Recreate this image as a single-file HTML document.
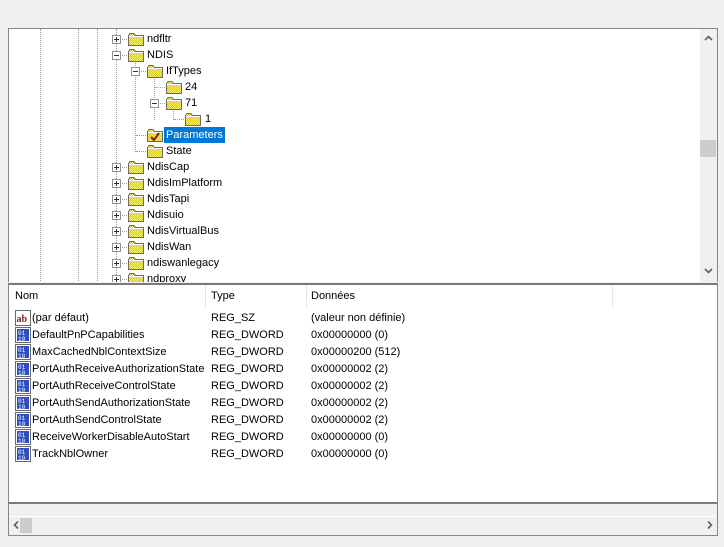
<!DOCTYPE html>
<html><head><meta charset="utf-8"><style>
*{margin:0;padding:0;box-sizing:border-box}
body{width:724px;height:547px;background:#f0f0f0;position:relative;overflow:hidden;font-family:"Liberation Sans",Arial,sans-serif;font-size:11px;color:#000}
.abs{position:absolute}
#tree{left:8px;top:28px;width:710px;height:254px;background:#fff;border:1px solid #828790;border-bottom:none;overflow:hidden}
#ti{position:absolute;left:0;top:2px;width:690px;height:260px}
.vl{position:absolute;width:0;border-left:1px dotted #a0a0a0}
.hl{position:absolute;height:0;border-top:1px dotted #a0a0a0}
.exp{position:absolute;width:9px;height:9px;border:1px solid #919191;background:#fff}
.exp:before{content:"";position:absolute;left:1px;top:3px;width:5px;height:1px;background:#333}
.exp.p:after{content:"";position:absolute;left:3px;top:1px;width:1px;height:5px;background:#333}
.fd{position:absolute;width:17px;height:14px}
.tx{position:absolute;height:16px;line-height:16px;white-space:nowrap}
.sel{background:#0078d7;color:#fff;padding:0 2px}
#vs{left:691px;top:0;width:17px;height:253px;background:#f0f0f0}
#list{left:8px;top:283px;width:710px;height:221px;background:#fff;border:1px solid #828790;border-top:2px solid #7a7a7a;border-bottom:2px solid #7a7a7a}
.hd{position:absolute;top:0;height:23px;line-height:23px}
.sep{position:absolute;top:0;width:1px;height:23px;background:#e5e5e5}
.row{position:absolute;left:0;height:17px;line-height:17px;white-space:nowrap}
.ic{position:absolute;left:6px;top:0;width:16px;height:16px}
</style></head><body>
<svg width="0" height="0" style="position:absolute"><defs>
<pattern id="pt" width="2" height="2" patternUnits="userSpaceOnUse"><rect width="2" height="2" fill="#f8f060"/><rect width="1" height="1" fill="#d8c830"/><rect x="1" y="1" width="1" height="1" fill="#d8c830"/></pattern>
<g id="f"><path d="M1.5 3.5 V13.5 H16.5 V3.5 H8.5 L7 1.5 H3 L1.5 3.5Z" fill="url(#pt)" stroke="#6b6b6b"/><path d="M2 4.5 H16" stroke="#fff"/></g>
<g id="b"><rect x="0.5" y="0.5" width="15" height="15" fill="#fff" stroke="#6a6a6a"/><rect x="2" y="2" width="12" height="12" fill="#2a4fc0"/><text x="3" y="8" font-size="6" fill="#fff" font-family="Liberation Mono">01</text><text x="3" y="14" font-size="6" fill="#fff" font-family="Liberation Mono">10</text></g>
<g id="a"><rect x="0.5" y="0.5" width="15" height="15" fill="#fff" stroke="#6a6a6a"/><text x="1.5" y="12" font-size="10" font-weight="bold" fill="#8b1a1a" font-family="Liberation Serif">ab</text></g>
</defs></svg>
<div id="tree" class="abs">
<div class="vl" style="left:31px;top:0;height:254px"></div>
<div class="vl" style="left:69px;top:0;height:254px"></div>
<div class="vl" style="left:88px;top:0;height:254px"></div>
<div id="ti">
<div class="vl" style="left:107px;top:-2px;height:262px"></div>
<div class="vl" style="left:126px;top:32px;height:89px"></div>
<div class="vl" style="left:145px;top:48px;height:41px"></div>
<div class="vl" style="left:164px;top:80px;height:9px"></div>

<div class="hl" style="left:108px;top:8px;width:10px"></div>
<div class="hl" style="left:108px;top:24px;width:10px"></div>
<div class="hl" style="left:127px;top:40px;width:10px"></div>
<div class="hl" style="left:146px;top:56px;width:10px"></div>
<div class="hl" style="left:146px;top:72px;width:10px"></div>
<div class="hl" style="left:165px;top:88px;width:10px"></div>
<div class="hl" style="left:127px;top:104px;width:10px"></div>
<div class="hl" style="left:127px;top:120px;width:10px"></div>
<div class="hl" style="left:108px;top:136px;width:10px"></div>
<div class="hl" style="left:108px;top:152px;width:10px"></div>
<div class="hl" style="left:108px;top:168px;width:10px"></div>
<div class="hl" style="left:108px;top:184px;width:10px"></div>
<div class="hl" style="left:108px;top:200px;width:10px"></div>
<div class="hl" style="left:108px;top:216px;width:10px"></div>
<div class="hl" style="left:108px;top:232px;width:10px"></div>
<div class="hl" style="left:108px;top:248px;width:10px"></div>

<div class="exp p" style="left:103px;top:4px"></div>
<div class="exp" style="left:103px;top:20px"></div>
<div class="exp" style="left:122px;top:36px"></div>
<div class="exp" style="left:141px;top:68px"></div>
<div class="exp p" style="left:103px;top:132px"></div>
<div class="exp p" style="left:103px;top:148px"></div>
<div class="exp p" style="left:103px;top:164px"></div>
<div class="exp p" style="left:103px;top:180px"></div>
<div class="exp p" style="left:103px;top:196px"></div>
<div class="exp p" style="left:103px;top:212px"></div>
<div class="exp p" style="left:103px;top:228px"></div>
<div class="exp p" style="left:103px;top:244px"></div>

<svg class="fd" style="left:118px;top:1px"><use href="#f"/></svg>
<svg class="fd" style="left:118px;top:17px"><use href="#f"/></svg>
<svg class="fd" style="left:137px;top:33px"><use href="#f"/></svg>
<svg class="fd" style="left:156px;top:49px"><use href="#f"/></svg>
<svg class="fd" style="left:156px;top:65px"><use href="#f"/></svg>
<svg class="fd" style="left:175px;top:81px"><use href="#f"/></svg>
<svg class="fd" style="left:137px;top:97px"><use href="#f"/><path d="M5 9 L8 12 L13 5" stroke="#8b1a1a" stroke-width="2" fill="none"/></svg>
<svg class="fd" style="left:137px;top:113px"><use href="#f"/></svg>
<svg class="fd" style="left:118px;top:129px"><use href="#f"/></svg>
<svg class="fd" style="left:118px;top:145px"><use href="#f"/></svg>
<svg class="fd" style="left:118px;top:161px"><use href="#f"/></svg>
<svg class="fd" style="left:118px;top:177px"><use href="#f"/></svg>
<svg class="fd" style="left:118px;top:193px"><use href="#f"/></svg>
<svg class="fd" style="left:118px;top:209px"><use href="#f"/></svg>
<svg class="fd" style="left:118px;top:225px"><use href="#f"/></svg>
<svg class="fd" style="left:118px;top:241px"><use href="#f"/></svg>

<div class="tx" style="left:138px;top:0">ndfltr</div>
<div class="tx" style="left:138px;top:16px">NDIS</div>
<div class="tx" style="left:157px;top:32px">IfTypes</div>
<div class="tx" style="left:176px;top:48px">24</div>
<div class="tx" style="left:176px;top:64px">71</div>
<div class="tx" style="left:196px;top:80px">1</div>
<div class="tx sel" style="left:155px;top:96px">Parameters</div>
<div class="tx" style="left:157px;top:112px">State</div>
<div class="tx" style="left:138px;top:128px">NdisCap</div>
<div class="tx" style="left:138px;top:144px">NdisImPlatform</div>
<div class="tx" style="left:138px;top:160px">NdisTapi</div>
<div class="tx" style="left:138px;top:176px">Ndisuio</div>
<div class="tx" style="left:138px;top:192px">NdisVirtualBus</div>
<div class="tx" style="left:138px;top:208px">NdisWan</div>
<div class="tx" style="left:138px;top:224px">ndiswanlegacy</div>
<div class="tx" style="left:138px;top:240px">ndproxy</div>
</div>

<div id="vs" class="abs">
<svg class="abs" style="left:4px;top:5px" width="9" height="8"><path d="M1 6 L4.5 2.5 L8 6" stroke="#606060" stroke-width="1.6" fill="none"/></svg>
<div class="abs" style="left:0;top:111px;width:16px;height:17px;background:#cdcdcd"></div>
<svg class="abs" style="left:4px;top:238px" width="9" height="8"><path d="M1 2 L4.5 5.5 L8 2" stroke="#606060" stroke-width="1.6" fill="none"/></svg>
</div>
</div>

<div id="list" class="abs">
<div class="hd" style="left:6px">Nom</div>
<div class="sep" style="left:196px"></div>
<div class="hd" style="left:202px">Type</div>
<div class="sep" style="left:297px"></div>
<div class="hd" style="left:302px">Données</div>
<div class="sep" style="left:603px"></div>

<div class="row" style="top:25px;width:700px"><svg class="ic"><use href="#a"/></svg><span class="abs" style="left:23px">(par défaut)</span><span class="abs" style="left:202px">REG_SZ</span><span class="abs" style="left:302px">(valeur non définie)</span></div>
<div class="row" style="top:42px;width:700px"><svg class="ic"><use href="#b"/></svg><span class="abs" style="left:23px">DefaultPnPCapabilities</span><span class="abs" style="left:202px">REG_DWORD</span><span class="abs" style="left:302px">0x00000000 (0)</span></div>
<div class="row" style="top:59px;width:700px"><svg class="ic"><use href="#b"/></svg><span class="abs" style="left:23px">MaxCachedNblContextSize</span><span class="abs" style="left:202px">REG_DWORD</span><span class="abs" style="left:302px">0x00000200 (512)</span></div>
<div class="row" style="top:76px;width:700px"><svg class="ic"><use href="#b"/></svg><span class="abs" style="left:23px">PortAuthReceiveAuthorizationState</span><span class="abs" style="left:202px">REG_DWORD</span><span class="abs" style="left:302px">0x00000002 (2)</span></div>
<div class="row" style="top:93px;width:700px"><svg class="ic"><use href="#b"/></svg><span class="abs" style="left:23px">PortAuthReceiveControlState</span><span class="abs" style="left:202px">REG_DWORD</span><span class="abs" style="left:302px">0x00000002 (2)</span></div>
<div class="row" style="top:110px;width:700px"><svg class="ic"><use href="#b"/></svg><span class="abs" style="left:23px">PortAuthSendAuthorizationState</span><span class="abs" style="left:202px">REG_DWORD</span><span class="abs" style="left:302px">0x00000002 (2)</span></div>
<div class="row" style="top:127px;width:700px"><svg class="ic"><use href="#b"/></svg><span class="abs" style="left:23px">PortAuthSendControlState</span><span class="abs" style="left:202px">REG_DWORD</span><span class="abs" style="left:302px">0x00000002 (2)</span></div>
<div class="row" style="top:144px;width:700px"><svg class="ic"><use href="#b"/></svg><span class="abs" style="left:23px">ReceiveWorkerDisableAutoStart</span><span class="abs" style="left:202px">REG_DWORD</span><span class="abs" style="left:302px">0x00000000 (0)</span></div>
<div class="row" style="top:161px;width:700px"><svg class="ic"><use href="#b"/></svg><span class="abs" style="left:23px">TrackNblOwner</span><span class="abs" style="left:202px">REG_DWORD</span><span class="abs" style="left:302px">0x00000000 (0)</span></div>
</div>

<div class="abs" style="left:8px;top:504px;width:710px;height:32px;border:1px solid #828790;border-top:none;background:#f0f0f0">
<div class="abs" style="left:1px;top:12px;width:706px;height:1px;background:#fff"></div>
<svg class="abs" style="left:3px;top:16px" width="8" height="10"><path d="M6 1.5 L2.5 5 L6 8.5" stroke="#606060" stroke-width="1.6" fill="none"/></svg>
<div class="abs" style="left:11px;top:14px;width:12px;height:15px;background:#cdcdcd"></div>
<svg class="abs" style="left:697px;top:16px" width="8" height="10"><path d="M2 1.5 L5.5 5 L2 8.5" stroke="#606060" stroke-width="1.6" fill="none"/></svg>
</div>
</body></html>
